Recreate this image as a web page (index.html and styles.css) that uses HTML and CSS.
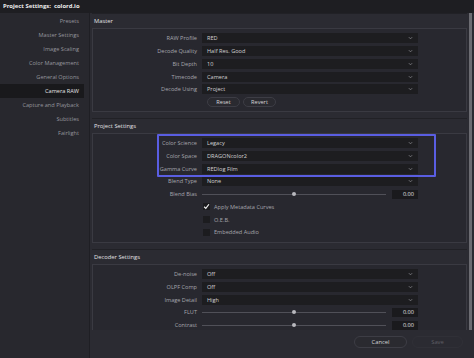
FILE: index.html
```html
<!DOCTYPE html>
<html>
<head>
<meta charset="utf-8">
<link rel="stylesheet" href="styles.css">
</head>
<body>
<div class="app">
  <div class="titlebar">Project Settings:&nbsp; colord.io</div>
  <div class="main">
    <nav class="sidebar">
      <div class="nav-item">Presets</div>
      <div class="nav-item">Master Settings</div>
      <div class="nav-item">Image Scaling</div>
      <div class="nav-item">Color Management</div>
      <div class="nav-item">General Options</div>
      <div class="nav-item active">Camera RAW</div>
      <div class="nav-item">Capture and Playback</div>
      <div class="nav-item">Subtitles</div>
      <div class="nav-item">Fairlight</div>
    </nav>
    <div class="panel">
      <div class="scroll">
        <div class="content">
          <section class="section">
            <div class="sec-head">Master</div>
            <div class="box">
              <div class="row"><div class="label">RAW Profile</div><div class="select"><span>RED</span><svg class="chev" viewBox="0 0 6 4"><path d="M1 1 L3 3 L5 1"/></svg></div></div>
              <div class="row"><div class="label">Decode Quality</div><div class="select"><span>Half Res. Good</span><svg class="chev" viewBox="0 0 6 4"><path d="M1 1 L3 3 L5 1"/></svg></div></div>
              <div class="row"><div class="label">Bit Depth</div><div class="select"><span>10</span><svg class="chev" viewBox="0 0 6 4"><path d="M1 1 L3 3 L5 1"/></svg></div></div>
              <div class="row"><div class="label">Timecode</div><div class="select"><span>Camera</span><svg class="chev" viewBox="0 0 6 4"><path d="M1 1 L3 3 L5 1"/></svg></div></div>
              <div class="row"><div class="label">Decode Using</div><div class="select"><span>Project</span><svg class="chev" viewBox="0 0 6 4"><path d="M1 1 L3 3 L5 1"/></svg></div></div>
              <div class="btn-row">
                <div class="pill small">Reset</div>
                <div class="pill small">Revert</div>
              </div>
            </div>
          </section>

          <section class="section">
            <div class="sec-head">Project Settings</div>
            <div class="box rel">
              <div class="row"><div class="label">Color Science</div><div class="select"><span>Legacy</span><svg class="chev" viewBox="0 0 6 4"><path d="M1 1 L3 3 L5 1"/></svg></div></div>
              <div class="row"><div class="label">Color Space</div><div class="select"><span>DRAGONcolor2</span><svg class="chev" viewBox="0 0 6 4"><path d="M1 1 L3 3 L5 1"/></svg></div></div>
              <div class="row"><div class="label">Gamma Curve</div><div class="select"><span>REDlog Film</span><svg class="chev" viewBox="0 0 6 4"><path d="M1 1 L3 3 L5 1"/></svg></div></div>
              <div class="row"><div class="label">Blend Type</div><div class="select"><span>None</span><svg class="chev" viewBox="0 0 6 4"><path d="M1 1 L3 3 L5 1"/></svg></div></div>
              <div class="row"><div class="label">Blend Bias</div><div class="slider-wrap"><div class="slider"><div class="track"></div><div class="knob"></div></div><div class="num">0.00</div></div></div>
              <div class="row"><div class="label"></div><div class="check-wrap"><span class="check on"><svg viewBox="0 0 8 8"><path d="M1.3 4.3 L3.2 6.2 L6.8 1.4"/></svg></span><span class="check-label">Apply Metadata Curves</span></div></div>
              <div class="row"><div class="label"></div><div class="check-wrap"><span class="check"></span><span class="check-label">O.E.B.</span></div></div>
              <div class="row"><div class="label"></div><div class="check-wrap"><span class="check"></span><span class="check-label">Embedded Audio</span></div></div>
              <div class="highlight"></div>
            </div>
          </section>

          <section class="section">
            <div class="sec-head">Decoder Settings</div>
            <div class="box last">
              <div class="row"><div class="label">De-noise</div><div class="select"><span>Off</span><svg class="chev" viewBox="0 0 6 4"><path d="M1 1 L3 3 L5 1"/></svg></div></div>
              <div class="row"><div class="label">OLPF Comp</div><div class="select"><span>Off</span><svg class="chev" viewBox="0 0 6 4"><path d="M1 1 L3 3 L5 1"/></svg></div></div>
              <div class="row"><div class="label">Image Detail</div><div class="select"><span>High</span><svg class="chev" viewBox="0 0 6 4"><path d="M1 1 L3 3 L5 1"/></svg></div></div>
              <div class="row"><div class="label">FLUT</div><div class="slider-wrap"><div class="slider"><div class="track"></div><div class="knob"></div></div><div class="num">0.00</div></div></div>
              <div class="row"><div class="label">Contrast</div><div class="slider-wrap"><div class="slider"><div class="track"></div><div class="knob"></div></div><div class="num">0.00</div></div></div>
            </div>
          </section>
        </div>
        <div class="scrollbar"><div class="thumb"></div></div>
      </div>
      <div class="footer">
        <div class="pill cancel">Cancel</div>
        <div class="pill save">Save</div>
      </div>
    </div>
  </div>
</div>
</body>
</html>
```
FILE: styles.css
```css
* { box-sizing: border-box; }
html, body { margin: 0; padding: 0; }
body {
  width: 474px;
  height: 358px;
  overflow: hidden;
  background: #2a2a31;
  font-family: "Open Sans", "Liberation Sans", sans-serif;
  font-size: 5.6px;
  color: #a4a4ab;
}
.app { width: 474px; height: 358px; display: flex; flex-direction: column; }
.titlebar {
  height: 13px;
  flex: none;
  background: #1e1e22;
  color: #ececec;
  font-weight: 700;
  font-size: 5.9px;
  line-height: 13px;
  padding-left: 3px;
}
.main { flex: 1; display: flex; min-height: 0; }
.sidebar {
  width: 90px;
  flex: none;
  background: #28282e;
  border-right: 1px solid #1f1f24;
  padding-top: 1px;
}
.nav-item {
  width: 84px;
  height: 14px;
  line-height: 14px;
  text-align: right;
  padding-right: 5px;
  color: #96969d;
}
.nav-item.active { background: #19191c; color: #e4e4e6; }
.panel { flex: 1; display: flex; flex-direction: column; min-width: 0; background: #2b2b32; }
.scroll { height: 317px; flex: none; display: flex; overflow: hidden; }
.content { width: 377px; padding-left: 2px; }
.scrollbar { flex: 1; padding: 0 1px 0 2px; }
.thumb { width: 3px; height: 317px; background: #6c6c72; }
.section { display: flex; flex-direction: column; }
.section + .section { margin-top: 6px; }
.sec-head {
  height: 15px;
  line-height: 15px;
  padding-left: 2px;
  color: #e2e2e4;
  font-size: 5.8px;
  border-top: 1px solid #212126;
}
.box {
  border: 1px solid #3a3a42;
  background: #28282f;
  padding: 3px 0 3px 0;
}
.box.last { padding-bottom: 8px; }
.rel { position: relative; }
.row { height: 12.75px; display: flex; align-items: center; }
.label { width: 109px; flex: none; text-align: right; padding-right: 5px; color: #a6a6ad; }
.select {
  width: 216px;
  height: 10px;
  background: #1d1d20;
  display: flex;
  align-items: center;
  justify-content: space-between;
  padding: 0 5px 0 5px;
  color: #d2d2d4;
}
.chev { width: 5px; height: 4px; }
.chev path { fill: none; stroke: #8c8c92; stroke-width: 0.9; }
.btn-row { display: flex; gap: 3px; padding-left: 114px; margin-top: 1.5px; margin-bottom: 0.5px; }
.pill {
  border: 1px solid #3d3d45;
  border-radius: 6px;
  background: #2a2a30;
  color: #d6d6d8;
  text-align: center;
  display: flex;
  align-items: center;
  justify-content: center;
}
.pill.small { width: 33px; height: 10px; }
.slider-wrap { width: 216px; display: flex; align-items: center; justify-content: space-between; }
.slider { width: 184px; height: 6px; position: relative; display: flex; align-items: center; }
.track { width: 100%; height: 1px; background: #505058; }
.knob {
  position: absolute;
  left: 90px;
  top: 1px;
  width: 4px;
  height: 4px;
  border-radius: 50%;
  background: #b8b8bd;
}
.num {
  width: 26px;
  height: 9px;
  background: #1a1a1d;
  color: #e0e0e2;
  display: flex;
  align-items: center;
  justify-content: flex-end;
  padding-right: 4px;
}
.check-wrap { display: flex; align-items: center; gap: 4px; padding-left: 1px; }
.check { width: 7px; height: 7px; background: #1c1c1f; display: flex; align-items: center; justify-content: center; }
.check svg { width: 7px; height: 7px; }
.check svg path { fill: none; stroke: #f2f2f2; stroke-width: 1.3; }
.check-label { color: #a6a6ad; }
.highlight {
  position: absolute;
  left: 64px;
  top: 0px;
  width: 279px;
  height: 43px;
  border: 2px solid #5a5ee2;
  border-radius: 1px;
}
.footer { flex: 1; display: flex; justify-content: flex-end; align-items: flex-start; gap: 5px; padding: 6px 11px 0 0; }
.pill.cancel { width: 53px; height: 12px; border-radius: 7px; font-size: 5.8px; }
.pill.save { width: 51px; height: 12px; border-radius: 7px; color: #5f5f66; border-color: #303037; background: #2b2b32; font-size: 5.8px; }
```
